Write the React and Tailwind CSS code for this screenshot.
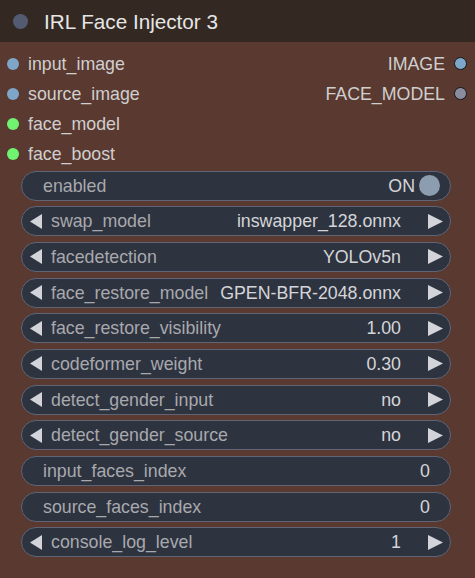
import React from "react";

const inputs = [
    { name: "input_image", color: "bg-[#7ea6c8]", out: "IMAGE", outColor: "bg-[#7ea6c8]" },
    { name: "source_image", color: "bg-[#7ea6c8]", out: "FACE_MODEL", outColor: "bg-[#8a8c9e]" },
    { name: "face_model", color: "bg-[#70f470]" },
    { name: "face_boost", color: "bg-[#70f470]" },
];

const widgets = [
    { type: "toggle", label: "enabled", value: "ON" },
    { type: "combo", label: "swap_model", value: "inswapper_128.onnx" },
    { type: "combo", label: "facedetection", value: "YOLOv5n" },
    { type: "combo", label: "face_restore_model", value: "GPEN-BFR-2048.onnx" },
    { type: "combo", label: "face_restore_visibility", value: "1.00" },
    { type: "combo", label: "codeformer_weight", value: "0.30" },
    { type: "combo", label: "detect_gender_input", value: "no" },
    { type: "combo", label: "detect_gender_source", value: "no" },
    { type: "number", label: "input_faces_index", value: "0" },
    { type: "number", label: "source_faces_index", value: "0" },
    { type: "combo", label: "console_log_level", value: "1" },
];

const ArrowLeft = () => (
    <svg width="12" height="15" viewBox="0 0 12 15" className="shrink-0 block">
        <polygon points="12,0 12,15 0,7.5" fill="#d2d4da" />
    </svg>
);

const ArrowRight = () => (
    <svg width="15" height="15" viewBox="0 0 15 15" className="shrink-0 block">
        <polygon points="0,0 0,15 15,7.5" fill="#d2d4da" />
    </svg>
);

const Widget = ({ type, label, value }) => {
    const base =
        "ml-[21px] w-[430px] h-[30px] rounded-full border border-[#5f6576] bg-[#2e3340] flex items-center text-[17.8px] leading-none";

    if (type === "toggle") {
        return (
            <div className={`${base} pl-[21px] pr-[10px]`}>
                <span className="pt-[2px] text-[#a8a9ad] flex-1">{label}</span>
                <span className="pt-[2px] text-[#d4d5d8]">{value}</span>
                <span className="shrink-0 ml-[4px] w-[21px] h-[21px] rounded-full bg-[#8c9db0]"></span>
            </div>
        );
    }

    if (type === "number") {
        return (
            <div className={`${base} pl-[21px] pr-[20px]`}>
                <span className="pt-[2px] text-[#a8a9ad] flex-1">{label}</span>
                <span className="pt-[2px] text-[#d4d5d8]">{value}</span>
            </div>
        );
    }

    return (
        <div className={`${base} pl-[8px] pr-[7px]`}>
            <ArrowLeft />
            <span className="pt-[2px] ml-[9px] text-[#a8a9ad] flex-1 whitespace-nowrap">{label}</span>
            <span className="pt-[2px] text-[#d4d5d8] whitespace-nowrap">{value}</span>
            <span className="shrink-0 ml-[27px]">
                <ArrowRight />
            </span>
        </div>
    );
};

export default function App() {
    return (
        <div className="w-[475px] h-[578px] bg-[#593930] font-['Liberation_Sans',Arial,sans-serif] overflow-hidden">
            {/* Title bar */}
            <div className="h-[42px] bg-[#332922] flex items-center pl-[13px]">
                <span className="shrink-0 w-[15px] h-[15px] rounded-full bg-[#535b73]"></span>
                <span className="ml-[16px] pt-[2px] text-[20.7px] leading-none text-[#e6e6e6]">
                    IRL Face Injector 3
                </span>
            </div>

            {/* Slots */}
            <div className="pt-[6.5px]">
                {inputs.map((s) => (
                    <div key={s.name} className="h-[30px] flex items-center text-[17.8px] leading-none">
                        <span className={`shrink-0 ml-[7px] w-[12px] h-[12px] rounded-full ${s.color}`}></span>
                        <span className="ml-[9px] pt-[2px] text-[#cfcfcf] flex-1">{s.name}</span>
                        {s.out && (
                            <>
                                <span className="pt-[2px] text-[#cfcfcf]">{s.out}</span>
                                <span
                                    className={`shrink-0 ml-[9px] mr-[8px] w-[13px] h-[13px] rounded-full border-[1.5px] border-[#16161a] ${s.outColor}`}
                                ></span>
                            </>
                        )}
                    </div>
                ))}
            </div>

            {/* Widgets */}
            <div className="mt-[2px] flex flex-col gap-[5.7px]">
                {widgets.map((w) => (
                    <Widget key={w.label} {...w} />
                ))}
            </div>
        </div>
    );
}
